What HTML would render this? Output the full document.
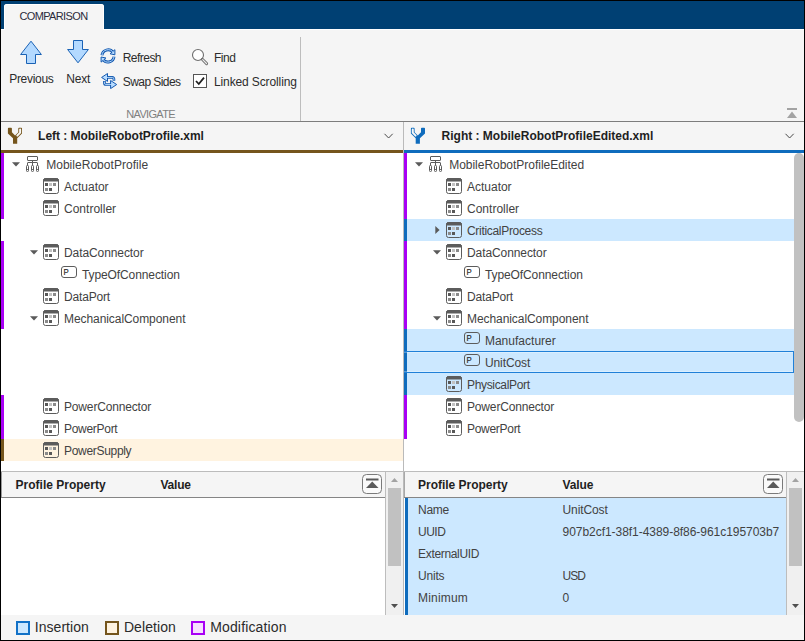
<!DOCTYPE html>
<html lang="en">
<head>
<meta charset="utf-8">
<title>Comparison</title>
<style>
html,body{margin:0;padding:0;}
body{width:805px;height:641px;position:relative;overflow:hidden;background:#000;font-family:"Liberation Sans", sans-serif;}
#app{position:absolute;left:1px;top:1px;width:803px;height:639px;background:#f5f5f5;}
.b{position:absolute;box-sizing:content-box;}
.i{position:absolute;overflow:visible;}
.t{position:absolute;white-space:nowrap;line-height:16px;}
</style>
</head>
<body>
<div id="app"></div>

<svg width="0" height="0" style="position:absolute">
<defs>
<symbol id="ic-st" viewBox="0 0 16 16">
 <rect x="0.5" y="0.5" width="15" height="15" rx="2" fill="none" stroke="#5c5c5c"/>
 <path d="M0.5 3V2.5a2 2 0 0 1 2-2h11a2 2 0 0 1 2 2V3z" fill="#5c5c5c" stroke="#5c5c5c"/>
 <rect x="2" y="5" width="3" height="3" fill="#585858"/><rect x="6" y="5" width="3" height="3" fill="#c2c2c2"/><rect x="10" y="5" width="3" height="3" fill="#8a8a8a"/>
 <rect x="2" y="10" width="3" height="3" fill="#8a8a8a"/><rect x="6" y="10" width="3" height="3" fill="#585858"/>
</symbol>
<symbol id="ic-prof" viewBox="0 0 14 16">
 <g fill="none" stroke="#5c5c5c">
 <rect x="1.5" y="0.5" width="10" height="4" rx="0.5"/>
 <path d="M6.5 4.5V9.5M1.5 9.5V7Q1.5 6.5 2 6.5h9Q11.5 6.5 11.5 7v2.5"/>
 <rect x="0.5" y="9.5" width="2" height="6" rx="0.8"/><rect x="5.5" y="9.5" width="2" height="6" rx="0.8"/><rect x="10.5" y="9.5" width="2" height="6" rx="0.8"/>
 <path d="M0.5 13.5h2M5.5 13.5h2M10.5 13.5h2" stroke-width="0.9"/>
 </g>
</symbol>
<symbol id="ic-yl" viewBox="0 0 16 18">
 <path d="M0.9 1.6Q0.9 0.8 1.7 0.8H4.1Q4.9 0.8 4.9 1.6V5.3L8.1 8.6L11.3 5.3V1.6Q11.3 0.8 12.1 0.8H14.2Q15 0.8 15 1.6V6.5L10.2 11.3V16.7H6V11.3L0.9 6.5Z" fill="#75551c"/>
 <path d="M13.15 2.5V5.7L10.3 8.6" fill="none" stroke="#f8f8f8" stroke-width="2" stroke-linecap="round"/>
</symbol>
<symbol id="ic-yr" viewBox="0 0 16 18">
 <g transform="translate(15.9,0) scale(-1,1)">
 <path d="M0.9 1.6Q0.9 0.8 1.7 0.8H4.1Q4.9 0.8 4.9 1.6V5.3L8.1 8.6L11.3 5.3V1.6Q11.3 0.8 12.1 0.8H14.2Q15 0.8 15 1.6V6.5L10.2 11.3V16.7H6V11.3L0.9 6.5Z" fill="#0f6cbd"/>
 <path d="M13.15 2.5V5.7L10.3 8.6" fill="none" stroke="#f8f8f8" stroke-width="2" stroke-linecap="round"/>
 </g>
</symbol>
<symbol id="ic-refresh" viewBox="0 0 16 16">
 <g id="rf-half">
 <path d="M1.98 7.27A6.05 6.05 0 0 1 12.96 4.43" fill="none" stroke="#1459b0" stroke-width="2.9"/>
 <path d="M14.9 1.7V6.8L10.1 5.8z" fill="#b8dcff" stroke="#1459b0" stroke-width="1" stroke-linejoin="round"/>
 <path d="M1.98 7.6A6.05 6.05 0 0 1 13.4 5" fill="none" stroke="#b8dcff" stroke-width="1"/>
 </g>
 <use href="#rf-half" transform="rotate(180 8 7.9)"/>
</symbol>
<symbol id="ic-swap" viewBox="0 0 16 16">
 <path d="M6 4.45H11.4A1.5 1.5 0 0 1 12.9 5.95V7.7M10 11.5H4.95A1.5 1.5 0 0 1 3.45 10V8.1" fill="none" stroke="#1459b0" stroke-width="2.7"/>
 <path d="M0.6 4.45L6.5 0.5V8.4zM15.7 11.55L9.6 7.5V15.6z" fill="#b8dcff" stroke="#1459b0" stroke-width="1" stroke-linejoin="round"/>
 <path d="M4.8 4.45H11.4A1.5 1.5 0 0 1 12.9 5.95V7.2M11.3 11.5H4.95A1.5 1.5 0 0 1 3.45 10V8.6" fill="none" stroke="#b8dcff" stroke-width="0.9"/>
</symbol>
<symbol id="ic-find" viewBox="0 0 18 18">
 <circle cx="7" cy="7" r="5.5" fill="#fff" stroke="#6e6e6e" stroke-width="1.1"/>
 <path d="M11.3 11.3L15.6 15.6" stroke="#6e6e6e" stroke-width="3" stroke-linecap="round"/>
 <path d="M11.7 11.7L15.5 15.5" stroke="#ececec" stroke-width="1.2" stroke-linecap="round"/>
</symbol>
</defs>
</svg>

<div class="b" style="left:1px;top:1px;width:803px;height:28px;background:#004073;"></div>
<div class="b" style="left:1px;top:29px;width:803px;height:1px;background:#fff;"></div>
<div class="b" style="left:4px;top:4px;width:100px;height:26px;background:#f5f5f5;border-radius:3px 3px 0 0;box-shadow:0 0 0 1px #fff inset;border-bottom:0"></div>
<div class="b" style="left:5px;top:28px;width:98px;height:3px;background:#f5f5f5;"></div>
<div class="b" style="left:300px;top:37px;width:1px;height:84px;background:#bdbdbd;"></div>
<div class="b" style="left:1px;top:121px;width:803px;height:1px;background:#7d7d7d;"></div>
<div class="b" style="left:1px;top:150px;width:403px;height:3px;background:#75551c;"></div>
<div class="b" style="left:404px;top:150px;width:400px;height:3px;background:#0f6cbd;"></div>
<div class="b" style="left:1px;top:153px;width:402px;height:318px;background:#fff;"></div>
<div class="b" style="left:404px;top:153px;width:400px;height:318px;background:#fff;"></div>
<div class="b" style="left:403px;top:122px;width:1px;height:493px;background:#bababa;"></div>
<div class="b" style="left:1px;top:153px;width:3px;height:66px;background:#a800f5;"></div>
<div class="b" style="left:1px;top:241px;width:3px;height:88px;background:#a800f5;"></div>
<div class="b" style="left:1px;top:395px;width:3px;height:44px;background:#a800f5;"></div>
<div class="b" style="left:1px;top:439px;width:3px;height:22px;background:#75551c;"></div>
<div class="b" style="left:4px;top:439px;width:399px;height:22px;background:#fff3e0;"></div>
<div class="b" style="left:404px;top:153px;width:3px;height:66px;background:#a800f5;"></div>
<div class="b" style="left:404px;top:219px;width:3px;height:22px;background:#0f6cbd;"></div>
<div class="b" style="left:407px;top:219px;width:387px;height:22px;background:#cce8ff;"></div>
<div class="b" style="left:404px;top:241px;width:3px;height:88px;background:#a800f5;"></div>
<div class="b" style="left:404px;top:329px;width:3px;height:66px;background:#0f6cbd;"></div>
<div class="b" style="left:407px;top:329px;width:387px;height:66px;background:#cce8ff;"></div>
<div class="b" style="left:404px;top:351px;width:389px;height:20px;background:transparent;border:1px solid #2080d8;border-left:0;box-shadow:inset 0 1px 0 rgba(255,255,255,.3),inset 0 -1px 0 rgba(255,255,255,.3)"></div>
<div class="b" style="left:404px;top:395px;width:3px;height:44px;background:#a800f5;"></div>
<div class="b" style="left:794px;top:153px;width:10px;height:269px;background:#c1c1c1;border-radius:5px"></div>
<div class="b" style="left:1px;top:471px;width:803px;height:1px;background:#bcbcbc;"></div>
<div class="b" style="left:1px;top:472px;width:384px;height:25px;background:#f5f5f5;"></div>
<div class="b" style="left:404px;top:472px;width:382px;height:25px;background:#f5f5f5;"></div>
<div class="b" style="left:404px;top:472px;width:1px;height:143px;background:#a8a8a8;"></div>
<div class="b" style="left:1px;top:472px;width:1px;height:143px;background:#9a9a9a;"></div>
<div class="b" style="left:1px;top:497px;width:384px;height:1px;background:#858585;"></div>
<div class="b" style="left:404px;top:497px;width:382px;height:1px;background:#858585;"></div>
<div class="b" style="left:1px;top:498px;width:384px;height:117px;background:#fff;"></div>
<div class="b" style="left:404px;top:498px;width:382px;height:117px;background:#fff;"></div>
<div class="b" style="left:405px;top:498px;width:3px;height:117px;background:#0f6cbd;"></div>
<div class="b" style="left:408px;top:498px;width:378px;height:117px;background:#cce8ff;"></div>
<div class="b" style="left:385px;top:472px;width:1px;height:143px;background:#bdbdbd;"></div>
<div class="b" style="left:386px;top:472px;width:17px;height:143px;background:#f0f0f0;"></div>
<div class="b" style="left:388px;top:488px;width:13px;height:78px;background:#c1c1c1;"></div>
<svg class="i" style="left:391px;top:478px" width="7" height="4"><path d="M0 4h7L3.5 0z" fill="#a3a3a3"/></svg>
<svg class="i" style="left:391px;top:604px" width="7" height="4"><path d="M0 0h7L3.5 4z" fill="#505050"/></svg>
<div class="b" style="left:786px;top:472px;width:1px;height:143px;background:#bdbdbd;"></div>
<div class="b" style="left:787px;top:472px;width:17px;height:143px;background:#f0f0f0;"></div>
<div class="b" style="left:789px;top:488px;width:13px;height:78px;background:#c1c1c1;"></div>
<svg class="i" style="left:792px;top:478px" width="7" height="4"><path d="M0 4h7L3.5 0z" fill="#a3a3a3"/></svg>
<svg class="i" style="left:792px;top:604px" width="7" height="4"><path d="M0 0h7L3.5 4z" fill="#505050"/></svg>
<svg class="i" style="left:362px;top:474px" width="21" height="20"><rect x="0.5" y="0.5" width="19" height="19" rx="4" fill="#fafafa" stroke="#7a7a7a"/><rect x="4" y="4.5" width="12.5" height="2" fill="#5a5a5a"/><path d="M4 14L10.25 7.5L16.5 14z" fill="#5a5a5a"/></svg>
<svg class="i" style="left:763px;top:474px" width="21" height="20"><rect x="0.5" y="0.5" width="19" height="19" rx="4" fill="#fafafa" stroke="#7a7a7a"/><rect x="4" y="4.5" width="12.5" height="2" fill="#5a5a5a"/><path d="M4 14L10.25 7.5L16.5 14z" fill="#5a5a5a"/></svg>
<div class="b" style="left:1px;top:615px;width:803px;height:24px;background:#f5f5f5;"></div>
<div class="b" style="left:16px;top:621px;width:10px;height:10px;border:2px solid #1171c7;background:#cce8ff"></div>
<div class="b" style="left:105px;top:621px;width:10px;height:10px;border:2px solid #75551c;background:#fff3e0"></div>
<div class="b" style="left:191px;top:621px;width:10px;height:10px;border:2px solid #a800f5;background:#f6e0ff"></div>
<svg class="i" style="left:787px;top:108px" width="10" height="10"><rect x="0" y="0" width="10" height="2" fill="#a3a3a3"/><path d="M0 10L5 3.6L10 10z" fill="#a3a3a3"/></svg>
<svg class="i" style="left:384px;top:132.5px" width="10" height="7"><path d="M0.5 0.8L4.6 5L8.7 0.8" fill="none" stroke="#4a4a4a" stroke-width="1"/></svg>
<svg class="i" style="left:785px;top:132.5px" width="10" height="7"><path d="M0.5 0.8L4.6 5L8.7 0.8" fill="none" stroke="#4a4a4a" stroke-width="1"/></svg>
<svg class="i" style="left:7px;top:127px" width="16" height="18"><use href="#ic-yl"/></svg>
<svg class="i" style="left:410px;top:127px" width="16" height="18"><use href="#ic-yr"/></svg>
<svg class="i" style="left:19px;top:40px" width="24" height="25"><path d="M12 1.2L22.4 14.5H16.5V23.5H7.5V14.5H1.6z" fill="#b3d9ff" stroke="#1a62b5" stroke-width="1" stroke-linejoin="miter"/></svg>
<svg class="i" style="left:66px;top:39px" width="24" height="25"><path d="M12 23.8L22.4 10.5H16.5V1.5H7.5V10.5H1.6z" fill="#b3d9ff" stroke="#1a62b5" stroke-width="1" stroke-linejoin="miter"/></svg>
<svg class="i" style="left:100.2px;top:48.2px" width="16" height="16"><use href="#ic-refresh"/></svg>
<svg class="i" style="left:101px;top:73px" width="16" height="16"><use href="#ic-swap"/></svg>
<svg class="i" style="left:191px;top:48px" width="18" height="18"><use href="#ic-find"/></svg>
<svg class="i" style="left:193px;top:74px" width="15" height="15"><rect x="0.5" y="0.5" width="13" height="13" fill="#fff" stroke="#555"/><path d="M3 7L5.8 10L11 3.6" fill="none" stroke="#1f1f1f" stroke-width="1.8"/></svg>
<svg class="i" style="left:26px;top:156px" width="14" height="16"><use href="#ic-prof"/></svg>
<svg class="i" style="left:12px;top:162px" width="8" height="5"><path d="M0 0.3h8L4 4.6z" fill="#5a5a5a"/></svg>
<svg class="i" style="left:43px;top:178px" width="16" height="16"><use href="#ic-st"/></svg>
<svg class="i" style="left:43px;top:200px" width="16" height="16"><use href="#ic-st"/></svg>
<svg class="i" style="left:43px;top:244px" width="16" height="16"><use href="#ic-st"/></svg>
<svg class="i" style="left:30px;top:250px" width="8" height="5"><path d="M0 0.3h8L4 4.6z" fill="#5a5a5a"/></svg>
<svg class="i" style="left:61px;top:266px" width="16" height="12" viewBox="0 0 16 12"><rect x="0.5" y="0.5" width="15" height="11" rx="2.5" fill="none" stroke="#5c5c5c"/><text x="2.6" y="9" font-size="8.6" font-family="Liberation Sans, sans-serif" fill="#262626" stroke="#262626" stroke-width="0.15" textLength="5.2" lengthAdjust="spacingAndGlyphs">P</text></svg>
<svg class="i" style="left:43px;top:288px" width="16" height="16"><use href="#ic-st"/></svg>
<svg class="i" style="left:43px;top:310px" width="16" height="16"><use href="#ic-st"/></svg>
<svg class="i" style="left:30px;top:316px" width="8" height="5"><path d="M0 0.3h8L4 4.6z" fill="#5a5a5a"/></svg>
<svg class="i" style="left:43px;top:398px" width="16" height="16"><use href="#ic-st"/></svg>
<svg class="i" style="left:43px;top:420px" width="16" height="16"><use href="#ic-st"/></svg>
<svg class="i" style="left:43px;top:442px" width="16" height="16"><use href="#ic-st"/></svg>
<svg class="i" style="left:429px;top:156px" width="14" height="16"><use href="#ic-prof"/></svg>
<svg class="i" style="left:415px;top:162px" width="8" height="5"><path d="M0 0.3h8L4 4.6z" fill="#5a5a5a"/></svg>
<svg class="i" style="left:446px;top:178px" width="16" height="16"><use href="#ic-st"/></svg>
<svg class="i" style="left:446px;top:200px" width="16" height="16"><use href="#ic-st"/></svg>
<svg class="i" style="left:446px;top:222px" width="16" height="16"><use href="#ic-st"/></svg>
<svg class="i" style="left:435px;top:226px" width="5" height="8"><path d="M0.3 0v8L4.6 4z" fill="#5a5a5a"/></svg>
<svg class="i" style="left:446px;top:244px" width="16" height="16"><use href="#ic-st"/></svg>
<svg class="i" style="left:433px;top:250px" width="8" height="5"><path d="M0 0.3h8L4 4.6z" fill="#5a5a5a"/></svg>
<svg class="i" style="left:464px;top:266px" width="16" height="12" viewBox="0 0 16 12"><rect x="0.5" y="0.5" width="15" height="11" rx="2.5" fill="none" stroke="#5c5c5c"/><text x="2.6" y="9" font-size="8.6" font-family="Liberation Sans, sans-serif" fill="#262626" stroke="#262626" stroke-width="0.15" textLength="5.2" lengthAdjust="spacingAndGlyphs">P</text></svg>
<svg class="i" style="left:446px;top:288px" width="16" height="16"><use href="#ic-st"/></svg>
<svg class="i" style="left:446px;top:310px" width="16" height="16"><use href="#ic-st"/></svg>
<svg class="i" style="left:433px;top:316px" width="8" height="5"><path d="M0 0.3h8L4 4.6z" fill="#5a5a5a"/></svg>
<svg class="i" style="left:464px;top:332px" width="16" height="12" viewBox="0 0 16 12"><rect x="0.5" y="0.5" width="15" height="11" rx="2.5" fill="none" stroke="#5c5c5c"/><text x="2.6" y="9" font-size="8.6" font-family="Liberation Sans, sans-serif" fill="#262626" stroke="#262626" stroke-width="0.15" textLength="5.2" lengthAdjust="spacingAndGlyphs">P</text></svg>
<svg class="i" style="left:464px;top:354px" width="16" height="12" viewBox="0 0 16 12"><rect x="0.5" y="0.5" width="15" height="11" rx="2.5" fill="none" stroke="#5c5c5c"/><text x="2.6" y="9" font-size="8.6" font-family="Liberation Sans, sans-serif" fill="#262626" stroke="#262626" stroke-width="0.15" textLength="5.2" lengthAdjust="spacingAndGlyphs">P</text></svg>
<svg class="i" style="left:446px;top:376px" width="16" height="16"><use href="#ic-st"/></svg>
<svg class="i" style="left:446px;top:398px" width="16" height="16"><use href="#ic-st"/></svg>
<svg class="i" style="left:446px;top:420px" width="16" height="16"><use href="#ic-st"/></svg>
<span class="t" style="left:19.5px;top:8px;font-size:11px;color:#2b2b3b;letter-spacing:-0.64px;">COMPARISON</span>
<span class="t" style="left:9.2px;top:71px;font-size:12px;color:#2c2c2c;letter-spacing:-0.3px;">Previous</span>
<span class="t" style="left:66.2px;top:71px;font-size:12px;color:#2c2c2c;letter-spacing:-0.2px;">Next</span>
<span class="t" style="left:122.7px;top:50px;font-size:12px;color:#2c2c2c;letter-spacing:-0.53px;">Refresh</span>
<span class="t" style="left:122.7px;top:74px;font-size:12px;color:#2c2c2c;letter-spacing:-0.55px;">Swap Sides</span>
<span class="t" style="left:214.0px;top:50px;font-size:12px;color:#2c2c2c;letter-spacing:-0.46px;">Find</span>
<span class="t" style="left:214.0px;top:74px;font-size:12px;color:#2c2c2c;letter-spacing:-0.12px;">Linked Scrolling</span>
<span class="t" style="left:126.3px;top:106px;font-size:11px;color:#7f7f7f;letter-spacing:-0.67px;">NAVIGATE</span>
<span class="t" style="left:38.1px;top:128px;font-size:12px;color:#1f1f1f;font-weight:700;letter-spacing:-0.03px;">Left : MobileRobotProfile.xml</span>
<span class="t" style="left:441.6px;top:128px;font-size:12px;color:#1f1f1f;font-weight:700;letter-spacing:-0.01px;">Right : MobileRobotProfileEdited.xml</span>
<span class="t" style="left:46.2px;top:157px;font-size:12px;color:#424242;letter-spacing:0.03px;">MobileRobotProfile</span>
<span class="t" style="left:64.0px;top:179px;font-size:12px;color:#424242;letter-spacing:-0.01px;">Actuator</span>
<span class="t" style="left:64.0px;top:201px;font-size:12px;color:#424242;letter-spacing:0.01px;">Controller</span>
<span class="t" style="left:64.0px;top:245px;font-size:12px;color:#424242;letter-spacing:-0.09px;">DataConnector</span>
<span class="t" style="left:81.9px;top:267px;font-size:12px;color:#424242;letter-spacing:-0.09px;">TypeOfConnection</span>
<span class="t" style="left:64.0px;top:289px;font-size:12px;color:#424242;letter-spacing:-0.18px;">DataPort</span>
<span class="t" style="left:64.0px;top:311px;font-size:12px;color:#424242;letter-spacing:-0.07px;">MechanicalComponent</span>
<span class="t" style="left:64.0px;top:399px;font-size:12px;color:#424242;letter-spacing:-0.16px;">PowerConnector</span>
<span class="t" style="left:64.0px;top:421px;font-size:12px;color:#424242;letter-spacing:-0.29px;">PowerPort</span>
<span class="t" style="left:64.0px;top:443px;font-size:12px;color:#424242;letter-spacing:-0.31px;">PowerSupply</span>
<span class="t" style="left:449.2px;top:157px;font-size:12px;color:#424242;letter-spacing:-0.02px;">MobileRobotProfileEdited</span>
<span class="t" style="left:467.0px;top:179px;font-size:12px;color:#424242;letter-spacing:-0.01px;">Actuator</span>
<span class="t" style="left:467.0px;top:201px;font-size:12px;color:#424242;letter-spacing:0.01px;">Controller</span>
<span class="t" style="left:467.0px;top:223px;font-size:12px;color:#424242;letter-spacing:-0.31px;">CriticalProcess</span>
<span class="t" style="left:467.0px;top:245px;font-size:12px;color:#424242;letter-spacing:-0.09px;">DataConnector</span>
<span class="t" style="left:484.9px;top:267px;font-size:12px;color:#424242;letter-spacing:-0.09px;">TypeOfConnection</span>
<span class="t" style="left:467.0px;top:289px;font-size:12px;color:#424242;letter-spacing:-0.18px;">DataPort</span>
<span class="t" style="left:467.0px;top:311px;font-size:12px;color:#424242;letter-spacing:-0.07px;">MechanicalComponent</span>
<span class="t" style="left:484.9px;top:333px;font-size:12px;color:#424242;letter-spacing:0.02px;">Manufacturer</span>
<span class="t" style="left:484.9px;top:355px;font-size:12px;color:#424242;letter-spacing:-0.08px;">UnitCost</span>
<span class="t" style="left:467.0px;top:377px;font-size:12px;color:#424242;letter-spacing:-0.33px;">PhysicalPort</span>
<span class="t" style="left:467.0px;top:399px;font-size:12px;color:#424242;letter-spacing:-0.16px;">PowerConnector</span>
<span class="t" style="left:467.0px;top:421px;font-size:12px;color:#424242;letter-spacing:-0.29px;">PowerPort</span>
<span class="t" style="left:15.6px;top:477px;font-size:12px;color:#1f1f1f;font-weight:700;">Profile Property</span>
<span class="t" style="left:160.5px;top:477px;font-size:12px;color:#1f1f1f;font-weight:700;letter-spacing:-0.23px;">Value</span>
<span class="t" style="left:418.1px;top:477px;font-size:12px;color:#1f1f1f;font-weight:700;letter-spacing:-0.03px;">Profile Property</span>
<span class="t" style="left:562.5px;top:477px;font-size:12px;color:#1f1f1f;font-weight:700;letter-spacing:-0.13px;">Value</span>
<span class="t" style="left:418.1px;top:502px;font-size:12px;color:#424242;letter-spacing:-0.33px;">Name</span>
<span class="t" style="left:562.5px;top:502px;font-size:12px;color:#424242;letter-spacing:-0.1px;">UnitCost</span>
<span class="t" style="left:418.1px;top:524px;font-size:12px;color:#424242;letter-spacing:-0.54px;">UUID</span>
<span class="t" style="left:562.5px;top:524px;font-size:12px;color:#424242;letter-spacing:-0.04px;">907b2cf1-38f1-4389-8f86-961c195703b7</span>
<span class="t" style="left:418.1px;top:546px;font-size:12px;color:#424242;letter-spacing:-0.34px;">ExternalUID</span>
<span class="t" style="left:418.1px;top:568px;font-size:12px;color:#424242;letter-spacing:-0.23px;">Units</span>
<span class="t" style="left:562.5px;top:568px;font-size:12px;color:#424242;letter-spacing:-0.91px;">USD</span>
<span class="t" style="left:418.1px;top:590px;font-size:12px;color:#424242;letter-spacing:0.16px;">Minimum</span>
<span class="t" style="left:562.5px;top:590px;font-size:12px;color:#424242;letter-spacing:-0.69px;">0</span>
<span class="t" style="left:34.8px;top:619px;font-size:14px;color:#2b2b2b;letter-spacing:0.04px;">Insertion</span>
<span class="t" style="left:123.9px;top:619px;font-size:14px;color:#2b2b2b;letter-spacing:0.08px;">Deletion</span>
<span class="t" style="left:210.2px;top:619px;font-size:14px;color:#2b2b2b;letter-spacing:0.15px;">Modification</span>
</body>
</html>
